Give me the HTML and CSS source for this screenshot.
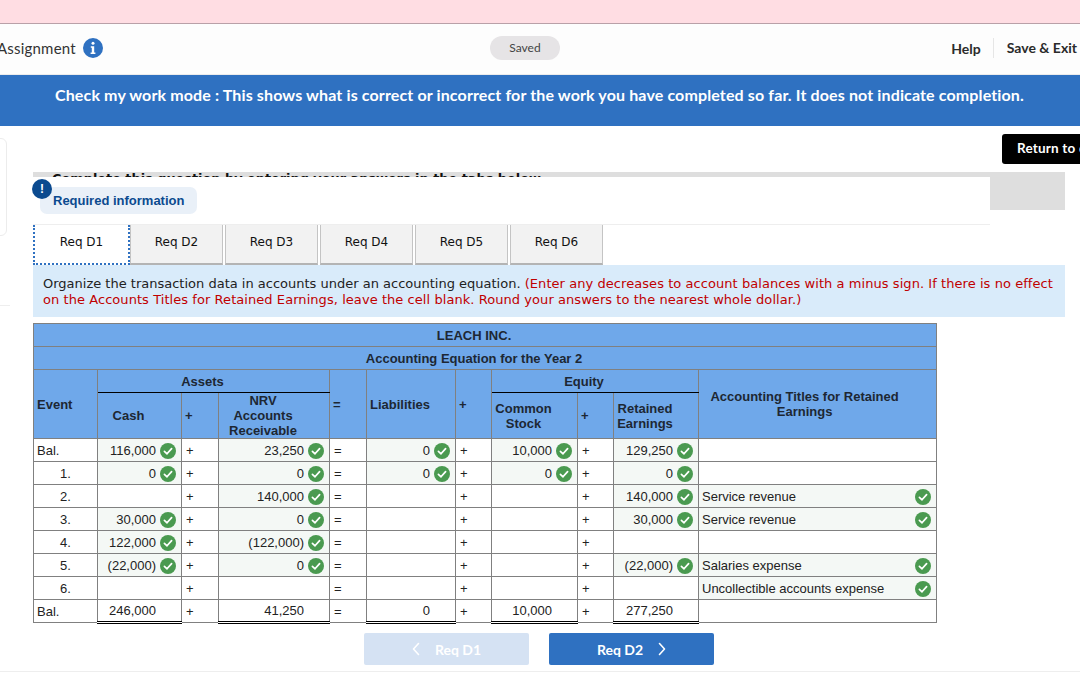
FILE: index.html
```html
<!DOCTYPE html>
<html lang="en">
<head>
<meta charset="utf-8">
<title>Assignment</title>
<link rel="stylesheet" href="styles.css">
</head>
<body>
<svg class="sprite" width="0" height="0" aria-hidden="true">
  <symbol id="ok" viewBox="0 0 16 16">
    <circle cx="8" cy="8" r="8" fill="#4a9a50"/>
    <path d="M4.4 8.4 7 10.8 11.6 5.6" fill="none" stroke="#fff" stroke-width="1.7" stroke-linecap="round" stroke-linejoin="round"/>
  </symbol>
</svg>
<div class="alert-strip"></div>
<header class="topbar">
  <div class="topbar-left">
    <span class="assignment">Assignment</span>
    <svg class="info" viewBox="0 0 20 20" width="20" height="20"><circle cx="10" cy="10" r="10" fill="#2f71c1"/><circle cx="10" cy="5.3" r="1.5" fill="#fff"/><path d="M7.8 8.2h3.4v6.2h1.2v1.5H7.6v-1.5h1.2V9.700h-1z" fill="#fff"/></svg>
  </div>
  <span class="saved">Saved</span>
  <nav class="topbar-right">
    <span class="help">Help</span>
    <span class="exit">Save &amp; Exit</span>
  </nav>
</header>
<div class="banner">Check my work mode : This shows what is correct or incorrect for the work you have completed so far. It does not indicate completion.</div>
<main class="main">
  <div class="side-stub"></div>
  <div class="side-rule"></div>
  <a class="return-btn">Return to question</a>
  <section class="question">
    <div class="q-head">
      <div class="q-clip"><span class="q-text">Complete this question by entering your answers in the tabs below.</span></div>
      <div class="q-body">
        <span class="req-pill">Required information</span>
        <span class="bang">!</span>
      </div>
      <div class="q-grey"></div>
    </div>
    <div class="tabs">
      <div class="tab tab-on">Req D1</div>
      <div class="tab">Req D2</div>
      <div class="tab">Req D3</div>
      <div class="tab">Req D4</div>
      <div class="tab">Req D5</div>
      <div class="tab">Req D6</div>
    </div>
    <div class="instr">Organize the transaction data in accounts under an accounting equation. <span class="red">(Enter any decreases to account balances with a minus sign. If there is no effect on the Accounts Titles for Retained Earnings, leave the cell blank. Round your answers to the nearest whole dollar.)</span></div>
    <table class="eq">
      <colgroup>
        <col class="c1"><col class="c2"><col class="c3"><col class="c4"><col class="c5"><col class="c6"><col class="c7"><col class="c8"><col class="c9"><col class="c10"><col class="c11">
      </colgroup>
      <thead>
        <tr><th colspan="11" class="ctr">LEACH INC.</th></tr>
        <tr><th colspan="11" class="ctr">Accounting Equation for the Year 2</th></tr>
        <tr class="h-group">
          <th rowspan="2" class="lft">Event</th>
          <th colspan="3" class="ctr under">Assets</th>
          <th rowspan="2" class="lft">=</th>
          <th rowspan="2" class="lft">Liabilities</th>
          <th rowspan="2" class="lft">+</th>
          <th colspan="3" class="ctr under">Equity</th>
          <th rowspan="2" class="titles">Accounting Titles for Retained Earnings</th>
        </tr>
        <tr class="h-cols">
          <th class="ctr">Cash</th><th class="lft">+</th><th class="ctr">NRV Accounts Receivable</th>
          <th class="ctr">Common Stock</th><th class="lft">+</th><th class="ctr">Retained Earnings</th>
        </tr>
      </thead>
      <tbody>
        <tr>
          <td>Bal.</td>
          <td class="ok"><span class="val">116,000<svg class="chk"><use href="#ok"/></svg></span></td><td class="op">+</td>
          <td class="ok"><span class="val">23,250<svg class="chk"><use href="#ok"/></svg></span></td><td class="op">=</td>
          <td class="ok"><span class="val">0<svg class="chk"><use href="#ok"/></svg></span></td><td class="op">+</td>
          <td class="ok"><span class="val">10,000<svg class="chk"><use href="#ok"/></svg></span></td><td class="op">+</td>
          <td class="ok"><span class="val">129,250<svg class="chk"><use href="#ok"/></svg></span></td><td></td>
        </tr>
        <tr>
          <td class="num">1.</td>
          <td class="ok"><span class="val">0<svg class="chk"><use href="#ok"/></svg></span></td><td class="op">+</td>
          <td class="ok"><span class="val">0<svg class="chk"><use href="#ok"/></svg></span></td><td class="op">=</td>
          <td class="ok"><span class="val">0<svg class="chk"><use href="#ok"/></svg></span></td><td class="op">+</td>
          <td class="ok"><span class="val">0<svg class="chk"><use href="#ok"/></svg></span></td><td class="op">+</td>
          <td class="ok"><span class="val">0<svg class="chk"><use href="#ok"/></svg></span></td><td></td>
        </tr>
        <tr>
          <td class="num">2.</td>
          <td></td><td class="op">+</td>
          <td class="ok"><span class="val">140,000<svg class="chk"><use href="#ok"/></svg></span></td><td class="op">=</td>
          <td></td><td class="op">+</td>
          <td></td><td class="op">+</td>
          <td class="ok"><span class="val">140,000<svg class="chk"><use href="#ok"/></svg></span></td>
          <td class="ok"><span class="acct">Service revenue<svg class="chk"><use href="#ok"/></svg></span></td>
        </tr>
        <tr>
          <td class="num">3.</td>
          <td class="ok"><span class="val">30,000<svg class="chk"><use href="#ok"/></svg></span></td><td class="op">+</td>
          <td class="ok"><span class="val">0<svg class="chk"><use href="#ok"/></svg></span></td><td class="op">=</td>
          <td></td><td class="op">+</td>
          <td></td><td class="op">+</td>
          <td class="ok"><span class="val">30,000<svg class="chk"><use href="#ok"/></svg></span></td>
          <td class="ok"><span class="acct">Service revenue<svg class="chk"><use href="#ok"/></svg></span></td>
        </tr>
        <tr>
          <td class="num">4.</td>
          <td class="ok"><span class="val">122,000<svg class="chk"><use href="#ok"/></svg></span></td><td class="op">+</td>
          <td class="ok"><span class="val">(122,000)<svg class="chk"><use href="#ok"/></svg></span></td><td class="op">=</td>
          <td></td><td class="op">+</td>
          <td></td><td class="op">+</td>
          <td></td><td></td>
        </tr>
        <tr>
          <td class="num">5.</td>
          <td class="ok"><span class="val">(22,000)<svg class="chk"><use href="#ok"/></svg></span></td><td class="op">+</td>
          <td class="ok"><span class="val">0<svg class="chk"><use href="#ok"/></svg></span></td><td class="op">=</td>
          <td></td><td class="op">+</td>
          <td></td><td class="op">+</td>
          <td class="ok"><span class="val">(22,000)<svg class="chk"><use href="#ok"/></svg></span></td>
          <td class="ok"><span class="acct">Salaries expense<svg class="chk"><use href="#ok"/></svg></span></td>
        </tr>
        <tr>
          <td class="num">6.</td>
          <td></td><td class="op">+</td>
          <td></td><td class="op">=</td>
          <td></td><td class="op">+</td>
          <td></td><td class="op">+</td>
          <td></td>
          <td class="ok"><span class="acct">Uncollectible accounts expense<svg class="chk"><use href="#ok"/></svg></span></td>
        </tr>
        <tr class="total">
          <td>Bal.</td>
          <td class="sum"><span class="val">246,000<i class="gap"></i></span></td><td class="op">+</td>
          <td class="sum"><span class="val">41,250<i class="gap"></i></span></td><td class="op">=</td>
          <td class="sum"><span class="val">0<i class="gap"></i></span></td><td class="op">+</td>
          <td class="sum"><span class="val">10,000<i class="gap"></i></span></td><td class="op">+</td>
          <td class="sum"><span class="val">277,250<i class="gap"></i></span></td><td></td>
        </tr>
      </tbody>
    </table>
  </section>
  <div class="pager">
    <a class="pg pg-off"><svg class="chev" viewBox="0 0 8 14" width="8" height="14"><path d="M6.5 1.5 1.5 7l5 5.500" fill="none" stroke="currentColor" stroke-width="1.6" stroke-linecap="round" stroke-linejoin="round"/></svg>Req D1</a>
    <a class="pg">Req D2<svg class="chev" viewBox="0 0 8 14" width="8" height="14"><path d="M1.500 1.500 6.500 7l-5 5.500" fill="none" stroke="currentColor" stroke-width="1.6" stroke-linecap="round" stroke-linejoin="round"/></svg></a>
  </div>
</main>
</body>
</html>
```

FILE: styles.css
```css
* { box-sizing: border-box; }
html, body { margin: 0; padding: 0; }
body {
  width: 1080px;
  height: 676px;
  overflow: hidden;
  background: #fff;
  font-family: "Lato", "Liberation Sans", sans-serif;
  color: #222;
}
.sprite { position: absolute; }

.alert-strip {
  height: 24px;
  background: #ffdde3;
  border-bottom: 1px solid #b9a0a8;
}

.topbar {
  height: 51px;
  padding-bottom: 2px;
  display: flex;
  align-items: center;
  background: #fdfdfd;
  border-bottom: 1px solid #ececec;
}
.topbar-left {
  width: 490px;
  display: flex;
  align-items: center;
  gap: 7px;
  margin-left: -3px;
  margin-right: 3px;
}
.assignment { font-size: 15px; color: #333; letter-spacing: 0.2px; }
.info { display: block; }
.saved {
  width: 70px;
  height: 24px;
  border-radius: 12px;
  background: #e6e4e6;
  text-align: center;
  font-size: 12px;
  line-height: 23px;
  color: #444;
}
.topbar-right {
  margin-left: auto;
  display: flex;
  align-items: center;
  font-size: 14px;
  font-weight: 700;
  color: #2b2b2b;
  padding-right: 3px;
}
.help { padding-right: 12px; }
.exit {
  padding-left: 13px;
  border-left: 1px solid #e6e6e6;
  line-height: 20px;
}

.banner {
  height: 51px;
  background: #2f71c1;
  color: #fff;
  font-size: 16px;
  font-weight: 700;
  letter-spacing: 0.13px;
  line-height: 39px;
  padding-left: 55px;
  white-space: nowrap;
}

.main { position: relative; height: 546px; border-bottom: 1px solid #eeeeee; }
.side-stub {
  position: absolute;
  left: -20px;
  top: 12px;
  width: 27px;
  height: 98px;
  border: 1px solid #ececec;
  border-radius: 6px;
}
.side-rule {
  position: absolute;
  left: 0;
  top: 179px;
  width: 10px;
  height: 1px;
  background: #eeeeee;
}
.return-btn {
  position: absolute;
  left: 1002px;
  top: 8px;
  width: 120px;
  height: 30px;
  border-radius: 3px;
  background: #000;
  color: #fff;
  font-size: 13.500px;
  font-weight: 700;
  letter-spacing: 0.2px;
  line-height: 28px;
  padding-left: 15px;
  white-space: nowrap;
}

.question { padding: 46px 15px 0 33px; }

.q-head {
  position: relative;
  height: 53px;
  width: 1032px;
  background: #fff;
}
.q-clip {
  height: 5px;
  width: 957px;
  overflow: hidden;
  background: #dedede;
  padding-left: 19px;
}
.q-text {
  display: block;
  font-family: "DejaVu Sans", sans-serif;
  font-size: 12.870px;
  font-weight: 700;
  line-height: 14px;
  color: #111;
  white-space: nowrap;
}
.q-body { position: relative; height: 48px; width: 957px; border-bottom: 1px solid #eeeeee; }
.bang {
  position: absolute;
  left: -1px;
  top: 2px;
  width: 20px;
  height: 20px;
  border-radius: 50%;
  background: #0b4a8f;
  color: #fff;
  font: 700 12px/20px "Liberation Sans", sans-serif;
  text-align: center;
}
.req-pill {
  position: absolute;
  left: 7px;
  top: 10px;
  width: 157px;
  height: 27px;
  border-radius: 7px;
  background: #e9f0f8;
  color: #0b4a8f;
  font: 700 13px/27px "Liberation Sans", sans-serif;
  padding-left: 13px;
}
.q-grey {
  position: absolute;
  left: 957px;
  top: 0;
  width: 75px;
  height: 38px;
  background: #dedede;
}

.tabs {
  display: flex;
  height: 40px;
  font-family: "DejaVu Sans", sans-serif;
  font-size: 12px;
  color: #111;
}
.tab {
  width: 93px;
  height: 40px;
  margin-right: 2px;
  text-align: center;
  line-height: 34px;
  background: #f2f2f2;
  border-left: 1px solid #c4c4c4;
  border-right: 1px solid #c4c4c4;
  border-bottom: 2px solid #b4b4b4;
}
.tab-on {
  width: 97px;
  margin-right: 0;
  background: #fff;
  border-left: 2px dotted #2f71c1;
  border-right: 2px dotted #2f71c1;
  border-bottom: 2px dotted #2f71c1;
}

.instr {
  height: 52px;
  background: #d9ebfa;
  padding: 11px 10px 0;
  font-family: "DejaVu Sans", sans-serif;
  font-size: 13px;
  line-height: 16px;
  color: #222;
}
.red { color: #c00000; letter-spacing: 0.06px; }

.eq {
  margin-top: 6px;
  width: 903px;
  table-layout: fixed;
  border-collapse: collapse;
  font-family: "Liberation Sans", sans-serif;
  font-size: 13px;
  color: #222;
}
.c1 { width: 64px; } .c2 { width: 84px; } .c3 { width: 37px; } .c4 { width: 111px; }
.c5 { width: 37px; } .c6 { width: 89px; } .c7 { width: 36px; } .c8 { width: 86px; }
.c9 { width: 36px; } .c10 { width: 85px; } .c11 { width: 238px; }

.eq th, .eq td { border: 1px solid #808080; padding: 0; }
.eq th {
  background: #6fa8ea;
  color: #1d2733;
  font-weight: 700;
  line-height: 15px;
  height: 23px;
}
.eq th.ctr { text-align: center; padding: 0 22px 0 0; }
.eq th.lft { text-align: left; padding-left: 3px; }
.eq th.under { border-bottom: 1px solid #000; }
.eq th.titles { padding: 0 30px 0 4px; text-align: center; }
.h-cols th { height: 46px; }

.eq td { height: 23px; line-height: 21px; padding: 1px 5px 0 3px; background: #fff; white-space: nowrap; }
.eq td.num { text-align: center; padding-left: 5px; }
.eq td.op { padding-left: 4px; }
.eq td.ok { background: #f4f8f5; }
.val { display: flex; justify-content: flex-end; align-items: center; height: 21px; }
.acct { display: flex; justify-content: space-between; align-items: center; height: 21px; }
.chk { width: 16px; height: 16px; margin-left: 4px; flex: none; display: block; }
.gap { width: 20px; flex: none; }

.total td { height: 23px; }
.total td.sum { border-top: 1px solid #000; border-bottom: 3px double #000; padding-top: 0; }
.total td.sum .val { height: 19px; }

.pager {
  margin-top: 9px;
  padding-right: 2px;
  display: flex;
  justify-content: center;
  gap: 20px;
}
.pg {
  width: 165px;
  height: 32px;
  border-radius: 2px;
  background: #2f71c1;
  color: #fff;
  font-size: 14px;
  font-weight: 700;
  display: flex;
  align-items: center;
  justify-content: center;
  gap: 15px;
}
.pg-off { background: #d5e2f3; }
.chev { display: block; }
```
